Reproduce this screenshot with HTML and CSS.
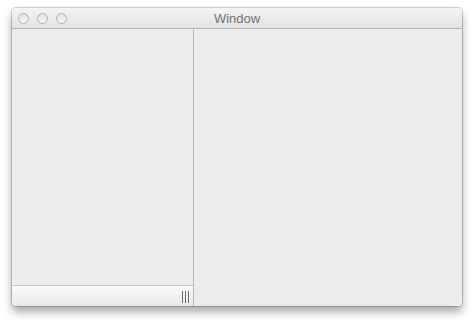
FILE: index.html
```html
<!DOCTYPE html>
<html>
<head>
<meta charset="utf-8">
<link rel="stylesheet" href="styles.css">
</head>
<body>
<div class="window">
  <div class="titlebar">
    <div class="lights">
      <span class="light"></span>
      <span class="light"></span>
      <span class="light"></span>
    </div>
    <div class="title">Window</div>
  </div>
  <div class="content">
    <div class="sidebar">
      <div class="sidebar-body"></div>
      <div class="sidebar-footer">
        <div class="grip"><i></i><i></i><i></i></div>
      </div>
    </div>
    <div class="main"></div>
  </div>
</div>
</body>
</html>
```
FILE: styles.css
```css
html, body {
  margin: 0;
  padding: 0;
  background: #ffffff;
}
body {
  width: 474px;
  height: 325px;
  padding: 8px 12px 0 12px;
  box-sizing: border-box;
  font-family: "Liberation Sans", Arial, sans-serif;
}
.window {
  width: 450px;
  height: 298px;
  display: flex;
  flex-direction: column;
  background: #ececec;
  border-radius: 4px;
  box-shadow: 0 0 0 1px rgba(0,0,0,0.18), 0 6px 10px rgba(0,0,0,0.35);
  overflow: hidden;
}
.titlebar {
  height: 20px;
  flex: none;
  position: relative;
  display: flex;
  align-items: center;
  background: linear-gradient(#f4f4f4, #e3e3e3);
  border-bottom: 1px solid #b4b4b4;
}
.lights {
  display: flex;
  gap: 8px;
  padding-left: 6px;
  padding-top: 1px;
}
.light {
  width: 9px;
  height: 9px;
  border-radius: 50%;
  border: 1px solid #b0b0b0;
  background: linear-gradient(#e2e2e2, #f6f6f6);
}
.title {
  position: absolute;
  left: 0;
  right: 0;
  top: 0;
  bottom: 0;
  display: flex;
  align-items: center;
  justify-content: center;
  font-size: 13px;
  color: #737373;
  padding-top: 1px;
}
.content {
  flex: 1;
  display: flex;
  min-height: 0;
}
.sidebar {
  width: 181px;
  flex: none;
  display: flex;
  flex-direction: column;
  border-right: 1px solid #b9b9b9;
}
.sidebar-body {
  flex: 1;
  background: #ececec;
}
.sidebar-footer {
  height: 20px;
  flex: none;
  border-top: 1px solid #c4c4c4;
  background: linear-gradient(#fafafa, #f1f1f1 50%, #e9e9e9);
  display: flex;
  justify-content: flex-end;
  align-items: center;
}
.grip {
  display: flex;
  gap: 2px;
  margin-right: 4px;
  margin-top: 1px;
  height: 12px;
  align-items: stretch;
}
.grip i {
  width: 1px;
  background: #707070;
}
.main {
  flex: 1;
  background: #ececec;
}
```
